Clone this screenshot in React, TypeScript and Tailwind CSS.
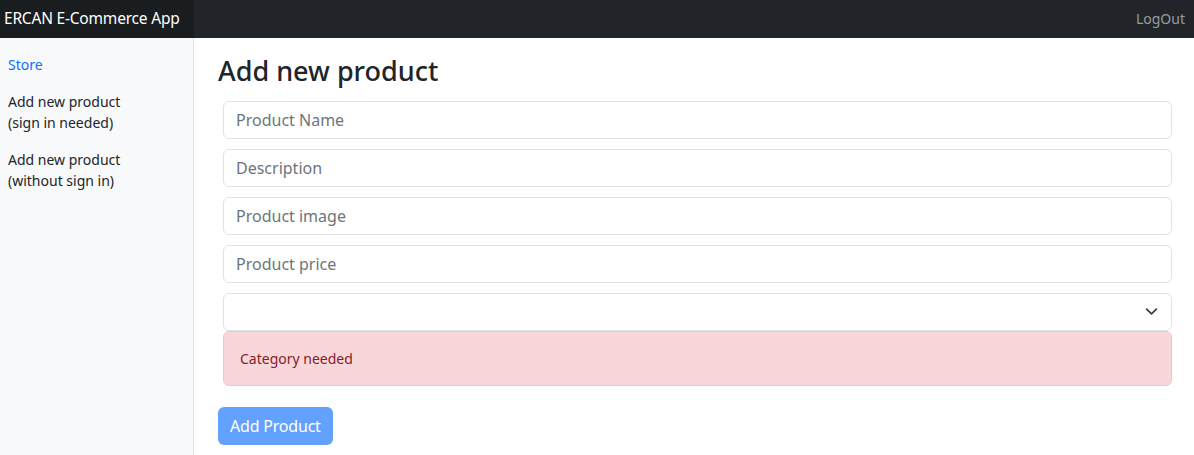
const font = { fontFamily: '"Segoe UI", "Noto Sans", "Liberation Sans", sans-serif' };

function SideLink({ lines, active }: { lines: string[]; active?: boolean }) {
  return (
    <a href="#" className={`block px-2 py-2 text-sm leading-[21px] ${active ? 'text-[#0d6efd]' : 'text-[#212529]'}`}>
      {lines.map((l) => (
        <div key={l}>{l}</div>
      ))}
    </a>
  );
}

function Field({ placeholder }: { placeholder: string }) {
  return (
    <input
      placeholder={placeholder}
      className="block w-full h-[38px] rounded-md border border-[#dee2e6] bg-white px-3 text-base text-[#212529] placeholder:text-[#6c757d] outline-none"
    />
  );
}

export default function App() {
  return (
    <div className="min-h-[455px] flex flex-col bg-white" style={font}>
      <nav className="flex h-[38px] bg-[#212529] items-center">
        <div className="w-[194px] h-full bg-[#1a1d20] flex items-center pl-1 text-white text-[15.5px] tracking-[-0.2px]">
          ERCAN E-Commerce App
        </div>
        <div className="flex-1" />
        <a href="#" className="pr-[9px] text-sm text-[#ffffff8c]">LogOut</a>
      </nav>
      <div className="flex flex-1">
        <aside className="w-[194px] bg-[#f8f9fa] border-r border-[#dee2e6] pt-2">
          <SideLink lines={['Store']} active />
          <SideLink lines={['Add new product', '(sign in needed)']} />
          <SideLink lines={['Add new product', '(without sign in)']} />
        </aside>
        <main className="flex-1 pl-6 pr-[22px] pt-[17px]">
          <h3 className="text-[27px] font-medium leading-[1.2] text-[#212529] mb-[14px]">Add new product</h3>
          <div className="pl-[5px] flex flex-col gap-[10px]">
            <Field placeholder="Product Name" />
            <Field placeholder="Description" />
            <Field placeholder="Product image" />
            <Field placeholder="Product price" />
            <div>
              <div className="relative">
                <select className="block w-full h-[38px] appearance-none rounded-md border border-[#dee2e6] bg-white px-3 text-base outline-none">
                  <option value=""></option>
                </select>
                <svg className="absolute right-[14px] top-[12px] pointer-events-none" width="13" height="13" viewBox="0 0 16 16">
                  <path d="m2 5 6 6 6-6" fill="none" stroke="#343a40" strokeWidth="2" strokeLinecap="round" strokeLinejoin="round" />
                </svg>
              </div>
              <div className="rounded-md border border-[#f5c2c7] bg-[#f8d7da] px-4 py-4 text-sm leading-[21px] text-[#842029]">
                Category needed
              </div>
            </div>
          </div>
          <button className="mt-[21px] h-[38px] px-3 rounded-md bg-[#62a1fe] text-white text-base tracking-[-0.2px]">Add Product</button>
        </main>
      </div>
    </div>
  );
}
